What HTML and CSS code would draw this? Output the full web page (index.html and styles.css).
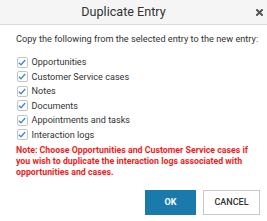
FILE: index.html
```html
<!DOCTYPE html>
<html lang="en">
<head>
<meta charset="utf-8">
<title>Duplicate Entry</title>
<link rel="stylesheet" href="styles.css">
</head>
<body>
<div class="dialog">
  <div class="header">
    <div class="title">Duplicate Entry</div>
    <div class="close" aria-label="Close">
      <svg width="7" height="7" viewBox="0 0 7 7"><path d="M1 1L6 6M6 1L1 6" stroke="#555" stroke-width="2" stroke-linecap="square"/></svg>
    </div>
  </div>
  <div class="content">
    <p class="intro">Copy the following from the selected entry to the new entry:</p>
    <ul class="options">
      <li class="option"><span class="box"><svg width="8" height="7" viewBox="0 0 8 7"><path d="M0.8 3.8L3 5.8L7.2 1" fill="none" stroke="#3a8ad8" stroke-width="1.3"/></svg></span>Opportunities</li>
      <li class="option"><span class="box"><svg width="8" height="7" viewBox="0 0 8 7"><path d="M0.8 3.8L3 5.8L7.2 1" fill="none" stroke="#3a8ad8" stroke-width="1.3"/></svg></span>Customer Service cases</li>
      <li class="option"><span class="box"><svg width="8" height="7" viewBox="0 0 8 7"><path d="M0.8 3.8L3 5.8L7.2 1" fill="none" stroke="#3a8ad8" stroke-width="1.3"/></svg></span>Notes</li>
      <li class="option"><span class="box"><svg width="8" height="7" viewBox="0 0 8 7"><path d="M0.8 3.8L3 5.8L7.2 1" fill="none" stroke="#3a8ad8" stroke-width="1.3"/></svg></span>Documents</li>
      <li class="option"><span class="box"><svg width="8" height="7" viewBox="0 0 8 7"><path d="M0.8 3.8L3 5.8L7.2 1" fill="none" stroke="#3a8ad8" stroke-width="1.3"/></svg></span>Appointments and tasks</li>
      <li class="option"><span class="box"><svg width="8" height="7" viewBox="0 0 8 7"><path d="M0.8 3.8L3 5.8L7.2 1" fill="none" stroke="#3a8ad8" stroke-width="1.3"/></svg></span>Interaction logs</li>
    </ul>
    <p class="note">Note: Choose Opportunities and Customer Service cases if you wish to duplicate the interaction logs associated with opportunities and cases.</p>
  </div>
  <div class="actions">
    <button class="btn btn-ok">OK</button>
    <button class="btn btn-cancel">CANCEL</button>
  </div>
</div>
</body>
</html>
```
FILE: styles.css
```css
html, body {
  margin: 0;
  padding: 0;
  background: #fff;
}
body {
  font-family: Roboto, "Liberation Sans", sans-serif;
  color: #333;
}
.dialog {
  width: 267px;
  height: 221px;
  background: #fff;
}
.header {
  display: flex;
  align-items: center;
  height: 24px;
  background: #f5f5f5;
  border-bottom: 1px solid #d9d9d9;
}
.title {
  flex: 1;
  text-align: center;
  font-size: 12.6px;
  line-height: 24px;
  color: #333;
}
.close {
  display: flex;
  width: 7px;
  height: 7px;
  margin: 1px 4px 0 9px;
}
.close svg {
  display: block;
}
.content {
  padding: 0 8px 0 16px;
}
.intro {
  margin: 8px 0 0;
  font-size: 9.2px;
  line-height: 12px;
  white-space: nowrap;
  color: #333;
}
.options {
  list-style: none;
  margin: 10px 0 0;
  padding: 0;
}
.option {
  display: flex;
  align-items: center;
  height: 14.5px;
  font-size: 9.1px;
  color: #333;
}
.box {
  display: flex;
  align-items: center;
  justify-content: center;
  box-sizing: border-box;
  width: 11px;
  height: 11px;
  margin: 0 4px 0 0.5px;
  border: 1px solid #c4c4c4;
  border-radius: 2px;
  background: #fff;
}
.box svg {
  display: block;
}
.note {
  margin: 3px 10px 0 0;
  font-size: 8.8px;
  line-height: 11.2px;
  font-weight: 700;
  color: #ee1d23;
}
.actions {
  display: flex;
  justify-content: flex-end;
  gap: 7px;
  padding: 11px 7px 0 0;
}
.btn {
  height: 25px;
  font-family: Roboto, "Liberation Sans", sans-serif;
  font-size: 9px;
  border-radius: 0;
  padding: 0;
  cursor: pointer;
}
.btn-ok {
  width: 51px;
  background: #1a7aab;
  color: #fff;
  border: none;
  font-weight: 700;
}
.btn-cancel {
  width: 57px;
  background: #fff;
  color: #333;
  border: 1px solid #c8c8c8;
  font-weight: 500;
}
```
